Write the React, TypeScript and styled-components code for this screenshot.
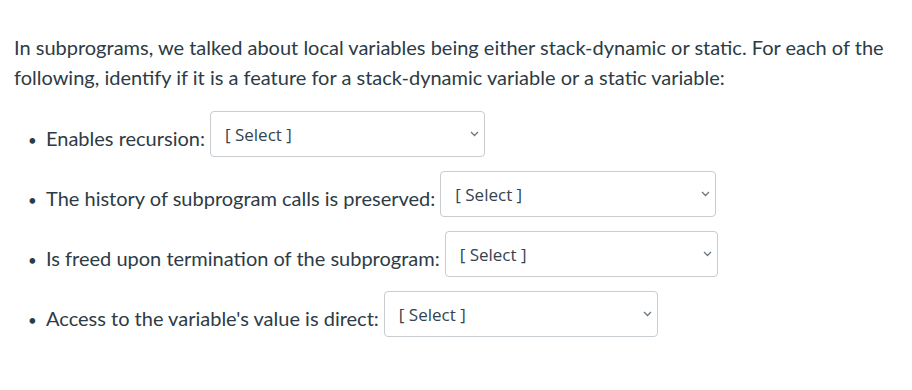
import React from 'react';
import styled, { createGlobalStyle } from 'styled-components';

const GlobalStyle = createGlobalStyle`
  body {
    margin: 0;
    background: #ffffff;
  }
`;

const StyledPage = styled.div`
  padding: 32px 14px 0 14px;
  font-family: Lato, 'Liberation Sans', sans-serif;
  font-size: 20px;
  line-height: 30px;
  color: #2d3b45;
`;

const StyledQuestion = styled.p`
  margin: 0;
`;

const StyledList = styled.ul`
  margin: 19px 0 0 0;
  padding: 0 0 0 32px;
  display: flex;
  flex-direction: column;
  gap: 14px;
`;

const StyledItem = styled.li`
  height: 46px;
  line-height: 30px;
  &::marker {
    content: '\\2022\\2002\\2009';
    font-size: 15px;
  }
`;

const StyledLabel = styled.span`
  margin-right: 5px;
`;

const StyledSelectWrap = styled.span`
  position: relative;
  display: inline-block;
  vertical-align: 5px;
`;

const StyledSelect = styled.select`
  appearance: none;
  box-sizing: border-box;
  width: ${({ width }: { width?: number }) => width || 275}px;
  height: 46px;
  margin: 0;
  padding: 0 30px 0 14px;
  border: 1px solid #c7cdd1;
  border-radius: 4px;
  background: #ffffff;
  font-family: 'Open Sans', 'Noto Sans', sans-serif;
  font-size: 17px;
  color: #34444f;
  outline: none;
`;

const StyledChevron = styled.svg`
  position: absolute;
  right: 6px;
  top: 20px;
  width: 9px;
  height: 6px;
  pointer-events: none;
`;

interface DropdownProps {
  width?: number;
}

function Dropdown({ width }: DropdownProps) {
  return (
    <StyledSelectWrap>
      <StyledSelect width={width} defaultValue="">
        <option value="">[ Select ]</option>
        <option value="stack">Stack-dynamic variable</option>
        <option value="static">Static variable</option>
      </StyledSelect>
      <StyledChevron viewBox="0 0 9 6">
        <path d="M1 1 L4.5 4.5 L8 1" fill="none" stroke="#6b7780" strokeWidth="1.3" />
      </StyledChevron>
    </StyledSelectWrap>
  );
}

const items = [
  { label: 'Enables recursion:', width: 275 },
  { label: 'The history of subprogram calls is preserved:', width: 276 },
  { label: 'Is freed upon termination of the subprogram:', width: 273 },
  { label: "Access to the variable's value is direct:", width: 274 }
];

export default function App() {
  return (
    <StyledPage>
      <GlobalStyle />
      <StyledQuestion>
        In subprograms, we talked about local variables being either stack-dynamic or static. For each of the
        following, identify if it is a feature for a stack-dynamic variable or a static variable:
      </StyledQuestion>
      <StyledList>
        {items.map((item) => (
          <StyledItem key={item.label}>
            <StyledLabel>{item.label}</StyledLabel>
            <Dropdown width={item.width} />
          </StyledItem>
        ))}
      </StyledList>
    </StyledPage>
  );
}
